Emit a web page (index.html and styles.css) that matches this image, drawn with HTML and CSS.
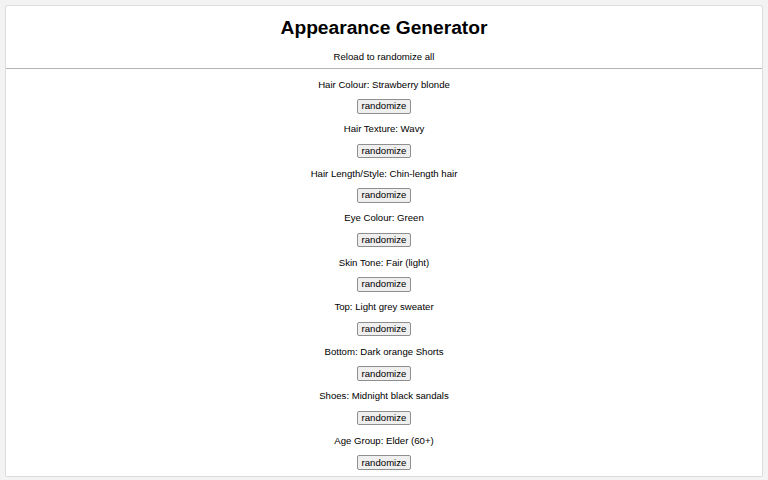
FILE: index.html
```html
<!DOCTYPE html>
<html>
<head>
<meta charset="utf-8">
<title>Appearance Generator</title>
<link rel="stylesheet" href="styles.css">
</head>
<body>
<div class="card">
  <header class="header">
    <h1 class="title">Appearance Generator</h1>
    <p class="subtitle">Reload to randomize all</p>
  </header>
  <hr class="divider">
  <main class="items">
    <div class="item"><p class="label">Hair Colour: Strawberry blonde</p><button class="btn">randomize</button></div>
    <div class="item"><p class="label">Hair Texture: Wavy</p><button class="btn">randomize</button></div>
    <div class="item"><p class="label">Hair Length/Style: Chin-length hair</p><button class="btn">randomize</button></div>
    <div class="item"><p class="label">Eye Colour: Green</p><button class="btn">randomize</button></div>
    <div class="item"><p class="label">Skin Tone: Fair (light)</p><button class="btn">randomize</button></div>
    <div class="item"><p class="label">Top: Light grey sweater</p><button class="btn">randomize</button></div>
    <div class="item"><p class="label">Bottom: Dark orange Shorts</p><button class="btn">randomize</button></div>
    <div class="item"><p class="label">Shoes: Midnight black sandals</p><button class="btn">randomize</button></div>
    <div class="item"><p class="label">Age Group: Elder (60+)</p><button class="btn">randomize</button></div>
  </main>
</div>
</body>
</html>
```

FILE: styles.css
```css
html, body {
  height: 100%;
}
body {
  margin: 5px;
  background: #f3f3f3;
  font-family: "Liberation Sans", Arial, sans-serif;
  color: #000;
  overflow: hidden;
}
.card {
  background: #fff;
  border: 1px solid #dcdcdc;
  border-radius: 2px;
  text-align: center;
}
.header {
  padding: 0;
}
.title {
  margin: 11px 0 0;
  font-size: 19.2px;
  line-height: 22px;
  font-weight: bold;
}
.subtitle {
  margin: 12px 0 0;
  font-size: 9.6px;
  line-height: 11px;
}
.divider {
  margin: 6px 0 0;
  border: 0;
  border-top: 1px solid #b4b4b4;
  height: 0;
}
.items {
  display: flow-root;
  padding-bottom: 6px;
}
.label {
  margin: 9.6px 0;
  font-size: 9.6px;
  line-height: 11px;
}
.btn {
  display: block;
  margin: 0 auto;
  height: 14.35px;
  padding: 0 4px;
  font-family: "Liberation Sans", Arial, sans-serif;
  font-size: 9.6px;
  line-height: 12px;
  color: #000;
  background: #efefef;
  border: 1px solid #8f8f8f;
  border-radius: 2px;
}
```
